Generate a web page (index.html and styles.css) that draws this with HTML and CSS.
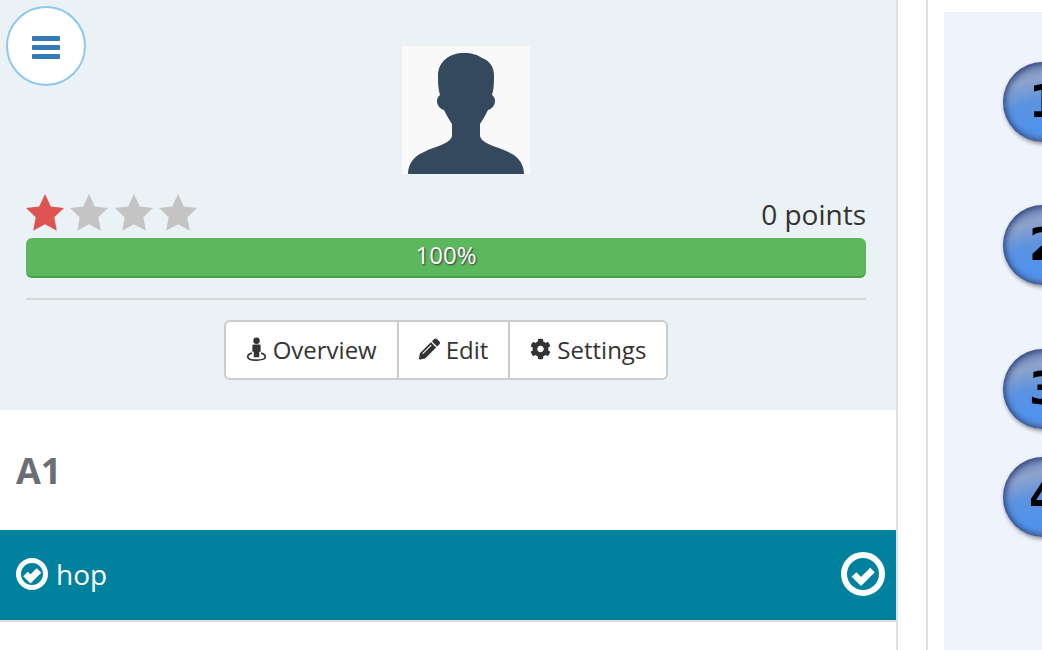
FILE: index.html
```html
<!DOCTYPE html>
<html lang="en">
<head>
  <meta charset="UTF-8">
  <title>Profile</title>
  <link rel="stylesheet" href="styles.css">
</head>
<body>
  <div class="page">
    <div class="sidebar">
      <button class="menu-btn">
        <svg class="menu-icon" viewBox="0 0 28 24"><rect y="0" width="28" height="5" rx="1"/><rect y="9" width="28" height="5" rx="1"/><rect y="18" width="28" height="5" rx="1"/></svg>
      </button>

      <div class="profile">
        <div class="avatar">
          <svg viewBox="0 0 128 128"><path d="M6 128C6 116 14 109 24 105C34 100 48 98 50 90L50 78C46 72 44 68 42 64C38 63 35 59 35 55C35 52 36 51 38 49C36 43 36 36 36 30C36 15 48 7 62 7C70 7 76 9 80 12C88 15 92 21 92 30C92 36 92 43 90 49C92 51 93 52 93 55C93 59 90 63 86 64C84 68 82 72 78 78L78 90C80 98 94 100 104 105C114 109 122 116 122 128Z"/></svg>
        </div>

        <div class="score-row">
          <div class="stars">
            <svg class="star star-on" viewBox="0 0 38 38"><path d="M19 0l5.800 12.400 13.200 1.600-9.700 9.200 2.500 13.500L19 30.200 7.200 36.700l2.500-13.500L0 14l13.200-1.600z"/></svg>
            <svg class="star" viewBox="0 0 38 38"><path d="M19 0l5.800 12.400 13.200 1.600-9.700 9.200 2.500 13.500L19 30.200 7.200 36.700l2.500-13.500L0 14l13.200-1.600z"/></svg>
            <svg class="star" viewBox="0 0 38 38"><path d="M19 0l5.800 12.400 13.200 1.600-9.700 9.200 2.500 13.500L19 30.200 7.200 36.700l2.500-13.500L0 14l13.200-1.600z"/></svg>
            <svg class="star" viewBox="0 0 38 38"><path d="M19 0l5.800 12.400 13.200 1.600-9.700 9.200 2.500 13.500L19 30.200 7.200 36.700l2.500-13.500L0 14l13.200-1.600z"/></svg>
          </div>
          <span class="points">0 points</span>
        </div>

        <div class="progress">100%</div>
        <hr class="divider">

        <div class="btn-group">
          <a class="btn">
            <svg class="btn-icon" viewBox="0 0 20 26"><circle cx="10" cy="4" r="3.500"/><path d="M5.500 9.500q0-1.500 1.500-1.500h6q1.500 0 1.500 1.500V16H13v6H7v-6H5.500z"/><path d="M5 17.500c-3 .8-4.500 2-4.500 3.800C.5 24 5 25 10 25s9.500-1 9.500-3.700c0-1.800-1.500-3-4.500-3.800" fill="none" stroke="currentColor" stroke-width="1.800"/></svg>
            Overview
          </a>
          <a class="btn">
            <svg class="btn-icon" viewBox="0 0 512 512"><path d="M497.900 142.100l-46.100 46.100c-4.700 4.700-12.300 4.700-17 0l-111-111c-4.700-4.700-4.700-12.300 0-17l46.100-46.100c18.700-18.700 49.100-18.700 67.900 0l60.100 60.100c18.800 18.700 18.800 49.100 0 67.900zM284.200 99.800L21.600 362.400.4 483.900c-2.900 16.400 11.400 30.600 27.800 27.800l121.500-21.300 262.600-262.600c4.700-4.700 4.700-12.300 0-17l-111-111c-4.800-4.700-12.400-4.700-17.100 0z"/><path class="pencil-line" d="M90 370L300 160"/></svg>
            Edit
          </a>
          <a class="btn">
            <svg class="btn-icon" viewBox="0 0 512 512"><path d="M487.400 315.700l-42.600-24.600c4.300-23.200 4.300-47 0-70.200l42.600-24.600c4.900-2.800 7.100-8.600 5.500-14-11.100-35.600-30-67.800-54.700-94.600-3.800-4.100-10-5.100-14.800-2.300L380.800 110c-17.900-15.400-38.500-27.300-60.800-35.100V25.800c0-5.600-3.900-10.500-9.400-11.700-36.700-8.200-74.300-7.800-109.200 0-5.500 1.200-9.400 6.100-9.400 11.700V75c-22.200 7.900-42.800 19.800-60.800 35.100L88.700 85.500c-4.900-2.800-11-1.900-14.800 2.300-24.700 26.700-43.600 58.900-54.700 94.600-1.700 5.400.6 11.200 5.500 14L67.300 221c-4.300 23.200-4.300 47 0 70.200l-42.600 24.600c-4.900 2.800-7.100 8.600-5.500 14 11.100 35.600 30 67.800 54.700 94.600 3.800 4.100 10 5.100 14.800 2.300l42.600-24.600c17.900 15.400 38.500 27.300 60.800 35.100v49.200c0 5.600 3.900 10.500 9.400 11.700 36.700 8.200 74.300 7.800 109.200 0 5.500-1.200 9.400-6.100 9.400-11.700v-49.200c22.200-7.900 42.800-19.800 60.800-35.100l42.600 24.600c4.900 2.800 11 1.900 14.800-2.300 24.700-26.700 43.600-58.900 54.700-94.600 1.500-5.500-.7-11.300-5.600-14.100zM256 336c-44.100 0-80-35.900-80-80s35.900-80 80-80 80 35.900 80 80-35.900 80-80 80z"/></svg>
            Settings
          </a>
        </div>
      </div>

      <h2 class="section-title">A1</h2>

      <div class="lesson">
        <svg class="check-small" viewBox="0 0 32 32"><circle cx="16" cy="16" r="13.500"/><path d="M9.500 16l5 5 8.500-8.500"/></svg>
        <span class="lesson-name">hop</span>
        <svg class="check-big" viewBox="0 0 44 44"><circle cx="22" cy="22" r="19"/><path d="M13 22.500l7 7 11.500-11.500"/></svg>
      </div>
    </div>

    <div class="gutter"></div>

    <div class="content">
      <div class="panel">
        <div class="step step-1">1</div>
        <div class="step step-2">2</div>
        <div class="step step-3">3</div>
        <div class="step step-4">4</div>
      </div>
    </div>
  </div>
</body>
</html>
```

FILE: styles.css
```css
html, body {
  margin: 0;
  height: 100%;
  overflow: hidden;
}
body {
  font-family: "Open Sans", "Liberation Sans", sans-serif;
  color: #333;
  background: white;
}
.page {
  display: flex;
  height: 650px;
}
.sidebar {
  position: relative;
  width: 896px;
  flex: none;
  border-right: 2px solid #e0e0e0;
}
.gutter {
  width: 28px;
  flex: none;
  border-right: 2px solid #e0e0e0;
}
.content {
  flex: 1;
  padding: 12px 0 0 16px;
  min-width: 0;
}

/* menu button */
.menu-btn {
  position: absolute;
  left: 6px;
  top: 6px;
  width: 80px;
  height: 80px;
  padding: 3px 0 0;
  border: 2px solid #8cc8f0;
  border-radius: 50%;
  background: white;
  display: flex;
  align-items: center;
  justify-content: center;
}
.menu-icon {
  width: 28px;
  height: 24px;
  fill: #337ab7;
}

/* profile header */
.profile {
  height: 410px;
  box-sizing: border-box;
  padding: 46px 30px 0 26px;
  background: #eaf2f5;
}
.avatar {
  width: 128px;
  height: 128px;
  margin: 0 0 0 376px;
  background: #f9f9f9;
}
.avatar svg {
  display: block;
  width: 128px;
  height: 128px;
  fill: #34495e;
  filter: blur(0.5px);
}
.score-row {
  display: flex;
  justify-content: space-between;
  align-items: flex-end;
  margin-top: 20px;
  height: 44px;
}
.stars {
  display: flex;
  gap: 6.300px;
  margin-bottom: 6px;
}
.star {
  width: 38px;
  height: 38px;
  fill: #c4c4c4;
}
.star-on {
  fill: #de5452;
}
.points {
  font-size: 28px;
  line-height: 38px;
  margin-bottom: 5px;
}
.progress {
  height: 40px;
  box-sizing: border-box;
  border-bottom: 2px solid #4a9d4a;
  border-radius: 6px;
  background: #5cb85c;
  color: white;
  font-size: 24px;
  line-height: 34px;
  text-align: center;
  text-shadow: 1px 1px 2px #333;
}
.divider {
  margin: 20px 0;
  border: 0;
  border-top: 2px solid #d8d8d8;
}
.btn-group {
  display: flex;
  justify-content: center;
}
.btn {
  display: flex;
  align-items: center;
  gap: 6px;
  height: 60px;
  box-sizing: border-box;
  padding: 0 20px 2px;
  background: white;
  border: 2px solid #ccc;
  border-left-width: 0;
  font-size: 24px;
}
.btn:first-child {
  border-left-width: 2px;
  border-radius: 6px 0 0 6px;
}
.btn:last-child {
  border-radius: 0 6px 6px 0;
}
.btn-icon {
  width: 21px;
  height: 24px;
  fill: currentColor;
}
.pencil-line {
  fill: none;
  stroke: white;
  stroke-width: 26;
}

/* lesson list */
.section-title {
  margin: 0;
  padding: 0 16px;
  height: 120px;
  font-size: 36px;
  font-weight: 700;
  line-height: 122px;
  color: #6b6e75;
}
.lesson {
  display: flex;
  align-items: center;
  height: 92px;
  box-sizing: border-box;
  padding: 0 11px 2px 16px;
  background: #00829f;
  border-bottom: 2px solid #dcdcdc;
  color: white;
  font-size: 28px;
}
.lesson-name {
  flex: 1;
  margin-left: 8px;
}
.check-small, .check-big {
  fill: none;
  stroke: white;
}
.check-small {
  width: 32px;
  height: 32px;
  stroke-width: 5;
  filter: blur(0.5px);
}
.check-big {
  width: 44px;
  height: 44px;
  stroke-width: 6;
}
.check-small path, .check-big path {
  stroke-width: 6.500;
}

/* numbered steps */
.panel {
  height: 640px;
  box-sizing: border-box;
  padding: 50px 0 0 59px;
  background: #eff3fb;
  overflow: hidden;
}
.step {
  width: 80px;
  height: 80px;
  box-sizing: border-box;
  padding-left: 26px;
  border-radius: 50%;
  background: linear-gradient(165deg, #5f79ad 0%, #8ea3cb 25%, #5c92e0 48%, #4f93ee 75%, #6a94d4 100%);
  box-shadow: inset 2px 2px 6px rgba(25, 45, 110, 0.7), inset -1px -3px 6px rgba(60, 70, 100, 0.6), 1px 2px 4px #888;
  color: black;
  font-family: "DejaVu Sans", sans-serif;
  font-size: 44px;
  font-weight: 700;
  line-height: 80px;
  filter: blur(0.7px);
}
.step-2 {
  margin-top: 63px;
}
.step-3 {
  margin-top: 64px;
}
.step-4 {
  margin-top: 28px;
}
```
